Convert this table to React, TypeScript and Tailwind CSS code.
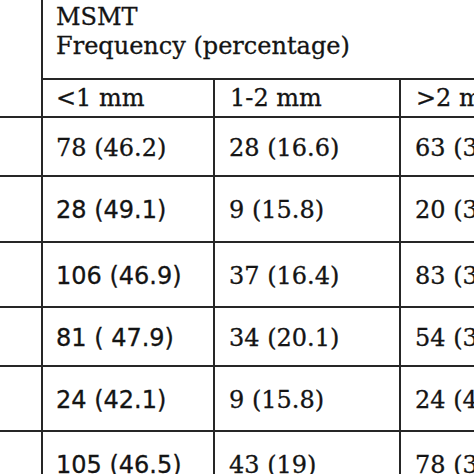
const serif = { fontFamily: '"DejaVu Serif", serif' };

type Cell = { text: string; sans?: boolean };

const rows: { h: string; cells: Cell[] }[] = [
  { h: 'h-[59px]', cells: [{ text: '78 (46.2)' }, { text: '28 (16.6)' }, { text: '63 (37.3)' }] },
  { h: 'h-[66px]', cells: [{ text: '28 (49.1)', sans: true }, { text: '9 (15.8)' }, { text: '20 (35.1)' }] },
  { h: 'h-[65px]', cells: [{ text: '106 (46.9)', sans: true }, { text: '37 (16.4)' }, { text: '83 (36.7)' }] },
  { h: 'h-[59px]', cells: [{ text: '81 ( 47.9)', sans: true }, { text: '34 (20.1)' }, { text: '54 (32.0)' }] },
  { h: 'h-[65px]', cells: [{ text: '24 (42.1)', sans: true }, { text: '9 (15.8)' }, { text: '24 (42.1)' }] },
  { h: 'h-[65px]', cells: [{ text: '105 (46.5)', sans: true }, { text: '43 (19)' }, { text: '78 (34.5)' }] },
];

const widths = ['w-[172px]', 'w-[186px]', 'w-[240px]'];

export default function App() {
  return (
    <div className="w-[474px] h-[474px] overflow-hidden bg-white text-[#141414] text-[24px] [-webkit-text-stroke:0.3px_#141414]">
      <div className="w-[640px] flex flex-col">
        {/* header block */}
        <div className="flex h-[118px] border-b-2 border-[#262626]">
          <div className="w-[41px] shrink-0" />
          <div className="flex-1 flex flex-col border-l-2 border-[#262626]">
            <div
              className="h-[80px] border-b-2 border-[#262626] pl-[13px] pt-[3px] leading-[29px] whitespace-nowrap"
              style={serif}
            >
              <div>MSMT</div>
              <div>Frequency (percentage)</div>
            </div>
            <div className="flex flex-1" style={serif}>
              <div className="w-[170px] shrink-0 flex items-center pl-[13px] whitespace-nowrap">&lt;1 mm</div>
              <div className="w-[186px] shrink-0 flex items-center pl-[15px] border-l-2 border-[#262626] whitespace-nowrap">
                1-2 mm
              </div>
              <div className="w-[240px] shrink-0 flex items-center pl-[15px] border-l-2 border-[#262626] whitespace-nowrap">
                &gt;2 mm
              </div>
            </div>
          </div>
        </div>

        {rows.map((r, i) => (
          <div key={i} className={`flex ${r.h} border-b-2 border-[#262626]`}>
            <div className="w-[41px] shrink-0" />
            {r.cells.map((c, j) => (
              <div
                key={j}
                className={`${widths[j]} shrink-0 flex items-center border-l-2 border-[#262626] whitespace-nowrap pt-[2px] ${
                  j === 0 ? 'pl-[13px]' : 'pl-[14px]'
                }`}
                style={{ fontFamily: c.sans ? '"DejaVu Sans", sans-serif' : '"DejaVu Serif", serif' }}
              >
                {c.text}
              </div>
            ))}
          </div>
        ))}
      </div>
    </div>
  );
}
